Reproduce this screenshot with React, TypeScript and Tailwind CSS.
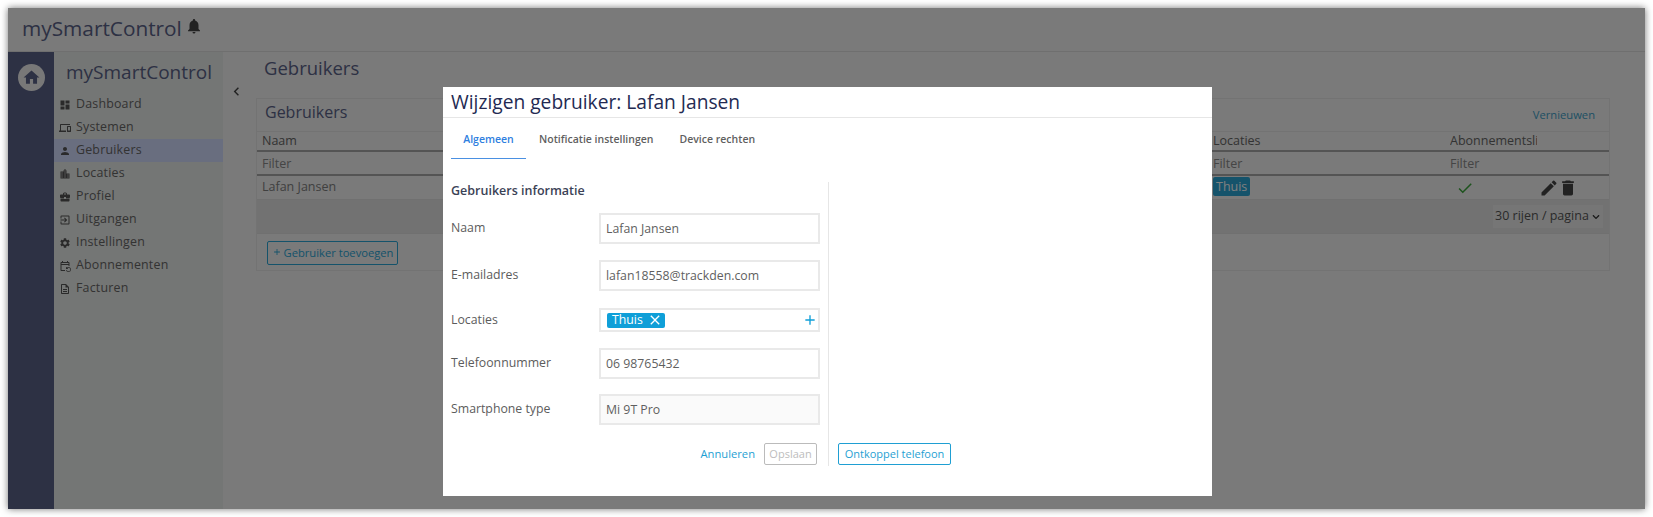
import {
  MdAdd,
  MdBusinessCenter,
  MdCheck,
  MdChevronLeft,
  MdClose,
  MdDashboard,
  MdDelete,
  MdEdit,
  MdHome,
  MdLocationCity,
  MdNotifications,
  MdOutlineDescription,
  MdOutlineDevices,
  MdOutlineEventRepeat,
  MdOutlineExitToApp,
  MdPerson,
  MdSettings,
} from 'react-icons/md';
import { FaChevronDown } from 'react-icons/fa';

const navItems = [
  { label: 'Dashboard', icon: MdDashboard },
  { label: 'Systemen', icon: MdOutlineDevices },
  { label: 'Gebruikers', icon: MdPerson, active: true },
  { label: 'Locaties', icon: MdLocationCity },
  { label: 'Profiel', icon: MdBusinessCenter },
  { label: 'Uitgangen', icon: MdOutlineExitToApp },
  { label: 'Instellingen', icon: MdSettings },
  { label: 'Abonnementen', icon: MdOutlineEventRepeat },
  { label: 'Facturen', icon: MdOutlineDescription },
];

const Field = ({ label, value, disabled }: { label: string; value: string; disabled?: boolean }) => (
  <div className="flex items-center">
    <span className="w-[148px] text-[12.3px] text-[#5c5c5c]">{label}</span>
    <div
      className={`flex h-[31px] w-[221px] items-center border-2 border-[#e9e9e9] px-[5px] pt-[1px] text-[12.3px] text-[#5f5f5f] ${
        disabled ? 'bg-[#fafafa]' : 'bg-white'
      }`}
    >
      {value}
    </div>
  </div>
);

export default function App() {
  return (
    <div className="h-[517px] w-[1653px] bg-white p-2 font-['Open_Sans','Noto_Sans',sans-serif]">
      <div className="relative flex h-[501px] w-[1637px] flex-col overflow-hidden bg-[#f4f4f4] shadow-[0_0_7px_rgba(0,0,0,0.55)]">
        {/* Top bar */}
        <header className="flex h-[44px] shrink-0 items-center border-b border-[#dedede] pb-[2px] pl-[14px]">
          <span className="text-[20.8px] text-[#5a6288]">mySmartControl</span>
          <MdNotifications className="mb-[6px] ml-[3px] h-[18px] w-[18px] text-[#444]" />
        </header>

        <div className="flex min-h-0 flex-1">
          {/* Icon rail */}
          <aside className="flex w-[46px] shrink-0 justify-center bg-[#5a6288] pt-[12px]">
            <div className="flex h-[27px] w-[27px] items-center justify-center rounded-full bg-[#f0f0f0]">
              <MdHome className="h-[19px] w-[19px] text-[#5a6288]" />
            </div>
          </aside>

          {/* Sidebar */}
          <nav className="w-[169px] shrink-0 bg-[#e9ecea]">
            <div className="pb-[4px] pl-[12px] pt-[3px] text-[19px] leading-[34px] text-[#5a6288]">mySmartControl</div>
            {navItems.map((item) => (
              <div
                key={item.label}
                className={`flex h-[23px] items-center gap-[5px] pl-[5px] text-[12.4px] tracking-[0.2px] text-[#666] ${
                  item.active ? 'bg-[#d3dcff]' : ''
                }`}
              >
                <item.icon className="h-[12px] w-[12px] shrink-0 text-[#555]" />
                {item.label}
              </div>
            ))}
          </nav>

          {/* Main */}
          <main className="min-w-0 flex-1 bg-[#f4f4f4]">
            <div className="flex h-[46px]">
              <div className="w-[41px] pl-[5px] pt-[31px]">
                <MdChevronLeft className="h-[17px] w-[17px] text-[#444]" />
              </div>
              <h1 className="pt-[1px] text-[18.5px] font-medium leading-[30px] text-[#5a6288]">Gebruikers</h1>
            </div>

            <section className="ml-[33px] h-[173px] w-[1354px] border border-[#e6e6e6]">
              <div className="flex h-[33px] items-center justify-between border-b border-[#e6e6e6] pb-[3px] pl-[8px] pr-[14px]">
                <span className="mb-[4px] text-[16px] font-medium text-[#5a6288]">Gebruikers</span>
                <span className="pt-[3px] text-[11.2px] text-[#3d9fc8]">Vernieuwen</span>
              </div>

              <div className="text-[12.5px] text-[#666]">
                <div className="grid h-[20px] grid-cols-[951px_237px_164px] items-center border-b-2 border-[#a8a8a8] pl-[5px] font-medium">
                  <span>Naam</span>
                  <span>Locaties</span>
                  <span className="w-[87px] overflow-hidden whitespace-nowrap">Abonnementslijst</span>
                </div>
                <div className="grid h-[24px] grid-cols-[951px_237px_164px] items-center border-b-2 border-[#a8a8a8] pl-[5px] pt-[2px] text-[#8a8a8a]">
                  <span>Filter</span>
                  <span>Filter</span>
                  <span>Filter</span>
                </div>
                <div className="grid h-[24px] grid-cols-[951px_237px_164px] items-center border-b border-[#e0e0e0] pl-[5px] text-[#808080]">
                  <span>Lafan Jansen</span>
                  <span>
                    <span className="rounded-[2px] bg-[#2aa6d6] px-[3px] py-[1px] text-white">Thuis</span>
                  </span>
                  <span className="flex items-center">
                    <MdCheck className="ml-[6px] h-[18px] w-[18px] text-[#3aa63a]" />
                    <MdEdit className="ml-[65px] h-[20px] w-[20px] text-[#444]" />
                    <MdDelete className="ml-[-1px] h-[20px] w-[20px] text-[#444]" />
                  </span>
                </div>
                <div className="flex h-[34px] items-center justify-end border-b border-[#e0e0e0] bg-[#e4e4e4] pr-[6px]">
                  <div className="flex h-[23px] w-[110px] items-center justify-between whitespace-nowrap bg-[#ededed] pl-[2px] pr-[3px] text-[#555]">
                    30 rijen / pagina
                    <FaChevronDown className="h-[8px] w-[8px] shrink-0 text-[#333]" />
                  </div>
                </div>
              </div>

              <div className="pl-[10px] pt-[7px]">
                <button className="flex h-[24px] w-[131px] items-center justify-center gap-[2px] whitespace-nowrap rounded-[2px] border border-[#2aa6d6] text-[11.2px] text-[#2aa6d6]">
                  <MdAdd className="mb-[3px] h-[10px] w-[10px]" />
                  Gebruiker toevoegen
                </button>
              </div>
            </section>
          </main>
        </div>

        {/* Modal backdrop */}
        <div className="absolute inset-0 bg-black/50" />

        {/* Modal */}
        <div className="absolute left-[435px] top-[79px] flex h-[409px] w-[769px] flex-col bg-white">
          <div className="flex h-[31px] shrink-0 items-center border-b border-[#e6e6e6] pl-[8px]">
            <h2 className="text-[19.2px] font-medium leading-none text-[#232a52]">Wijzigen gebruiker: Lafan Jansen</h2>
          </div>

          <div className="flex h-[41px] shrink-0 pl-[8px] text-[10.5px] font-semibold">
            <div className="flex w-[75px] items-center justify-center border-b border-[#4a90e2] pt-[3px] text-[#2f7fe0]">Algemeen</div>
            <div className="ml-[13px] flex items-center pt-[3px] text-[#5f5f5f]">Notificatie instellingen</div>
            <div className="ml-[26px] flex items-center pt-[3px] text-[#5f5f5f]">Device rechten</div>
          </div>

          <div className="flex pl-[8px] pt-[23px]">
            <div className="w-[377px] pr-[8px]">
              <div className="mb-[13px] text-[12.5px] font-semibold leading-[18px] text-[#3b4256]">
                Gebruikers informatie
              </div>
              <div className="flex flex-col">
                <Field label="Naam" value="Lafan Jansen" />
                <div className="mt-[16px]">
                  <Field label="E-mailadres" value="lafan18558@trackden.com" />
                </div>
                <div className="mt-[17px] flex items-center">
                  <span className="w-[148px] text-[12.3px] text-[#5c5c5c]">Locaties</span>
                  <div className="flex h-[24px] w-[221px] items-center justify-between border-2 border-[#e9e9e9] pl-[6px]">
                    <span className="flex h-[15px] items-center gap-[4px] rounded-[2px] bg-[#0f9fd8] pl-[5px] pr-[2px] text-[12.3px] text-white">
                      Thuis
                      <MdClose className="h-[16px] w-[16px]" />
                    </span>
                    <MdAdd className="h-[16px] w-[16px] text-[#0f9fd8]" />
                  </div>
                </div>
                <div className="mt-[16px]">
                  <Field label="Telefoonnummer" value="06 98765432" />
                </div>
                <div className="mt-[15px]">
                  <Field label="Smartphone type" value="Mi 9T Pro" disabled />
                </div>
              </div>
              <div className="mt-[18px] flex items-center justify-end gap-[9px] pr-[3px]">
                <span className="text-[11.2px] font-medium text-[#1f9fd3]">Annuleren</span>
                <button className="h-[22px] w-[53px] rounded-[2px] border border-[#bbb] text-[11px] font-medium text-[#bdbdbd]">
                  Opslaan
                </button>
              </div>
            </div>

            <div className="flex h-[284px] items-end border-l border-[#e6e6e6] pb-[1px] pl-[9px]">
              <button className="h-[22px] w-[113px] whitespace-nowrap rounded-[2px] border border-[#1f9fd3] text-[11px] font-medium text-[#1f9fd3]">
                Ontkoppel telefoon
              </button>
            </div>
          </div>
        </div>
      </div>
    </div>
  );
}
